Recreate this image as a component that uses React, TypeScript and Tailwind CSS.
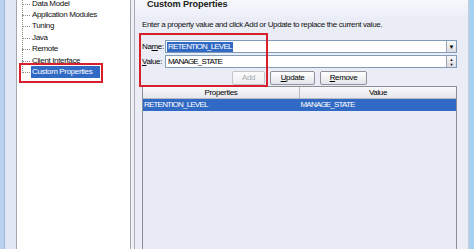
import React from "react";

const font = { fontFamily: '"Liberation Sans", Arial, sans-serif' };

function TreeItem({ label, selected }: { label: string; selected?: boolean }) {
  return (
    <div className="relative flex h-[11.4px] items-center">
      <div className="absolute left-[5px] top-1/2 w-[8px] border-t border-dotted border-[#8c8c8c]" />
      <span
        className={
          selected
            ? "ml-[14px] bg-[#316ac5] pl-[1px] pr-[8px] leading-[12px] text-white"
            : "ml-[15px] leading-[12px] text-[#111]"
        }
      >
        {label}
      </span>
    </div>
  );
}

export default function App() {
  return (
    <div
      className="relative flex h-[249px] w-[474px] overflow-hidden bg-[#e9ecf6] text-[8px] tracking-[-0.35px] text-black"
      style={font}
    >
      {/* left chrome */}
      <div className="w-[5px] shrink-0 border-r border-[#9fb8d8] bg-[#b9d2ee]" />
      <div className="w-[11px] shrink-0 bg-[#e2e7f5]" />
      {/* tree panel */}
      <div className="relative w-[115px] shrink-0 border-x border-[#a4a6b0] bg-white">
        <div className="absolute left-[5px] top-0 h-[73px] border-l border-dotted border-[#8c8c8c]" />
        <div className="mt-[-2px] flex flex-col">
          <TreeItem label="Data Model" />
          <TreeItem label="Application Modules" />
          <TreeItem label="Tuning" />
          <TreeItem label="Java" />
          <TreeItem label="Remote" />
          <TreeItem label="Client Interface" />
          <TreeItem label="Custom Properties" selected />
        </div>
        {/* annotation */}
        <div className="absolute left-[2px] top-[63px] h-[20px] w-[84px] border-2 border-[#d8202c]" />
      </div>
      {/* splitter */}
      <div className="w-[3px] shrink-0 bg-[#eef0f6]" />
      {/* right panel */}
      <div className="relative flex min-w-0 flex-1 flex-col border-l border-[#a9acb8] bg-[#eaedf6]">
        <div className="flex h-[17px] shrink-0 items-center bg-gradient-to-b from-[#f7f8fc] to-[#eceff8] pl-[12px]">
          <span className="mt-[-7px] text-[9.2px] font-bold tracking-[-0.1px] text-[#222]">Custom Properties</span>
        </div>
        <div className="flex flex-col pl-[7px] pr-[11px]">
          <div className="mt-[2px] h-[12px] leading-[12px] text-[#111]">
            Enter a property value and click Add or Update to replace the current value.
          </div>
          <div className="mt-[9px] flex h-[13px] items-center">
            <span className="w-[23px]">
              Na<span className="underline">m</span>e:
            </span>
            <div className="flex h-[13px] flex-1 items-center border border-[#7f9db9] bg-white">
              <span className="ml-[1px] bg-[#316ac5] px-[1px] leading-[10px] tracking-[-0.8px] text-white">RETENTION_LEVEL</span>
              <div className="flex-1" />
              <div className="flex h-full w-[10px] items-center justify-center border-l border-[#9ca3b4] bg-gradient-to-b from-[#f8f8f8] to-[#dcdde4] text-[6px] leading-none tracking-normal">
                ▼
              </div>
            </div>
          </div>
          <div className="mt-[2px] flex h-[13px] items-center">
            <span className="w-[23px]">
              <span className="underline">V</span>alue:
            </span>
            <div className="flex h-[13px] flex-1 items-center border border-[#7f9db9] bg-white">
              <span className="ml-[2px] leading-[10px] tracking-[-0.8px]">MANAGE_STATE</span>
              <div className="flex-1" />
              <div className="flex h-full w-[10px] flex-col items-center justify-center border-l border-[#9ca3b4] bg-gradient-to-b from-[#f8f8f8] to-[#dcdde4] text-[4px] leading-[5px] tracking-normal">
                <span>▲</span>
                <span>▼</span>
              </div>
            </div>
          </div>
          <div className="mt-[3px] flex h-[14px] justify-center gap-[5px]">
            <div className="flex w-[33px] items-center justify-center rounded-[2px] border border-[#c4c6cc] bg-gradient-to-b from-[#fbfbfb] to-[#eeeef2] text-[#a9abb2]">
              Add
            </div>
            <div className="flex w-[45px] items-center justify-center rounded-[2px] border border-[#8e939e] bg-gradient-to-b from-[#ffffff] to-[#e4e5ea]">
              <span>
                <span className="underline">U</span>pdate
              </span>
            </div>
            <div className="flex w-[47px] items-center justify-center rounded-[2px] border border-[#8e939e] bg-gradient-to-b from-[#ffffff] to-[#e4e5ea]">
              <span>
                <span className="underline">R</span>emove
              </span>
            </div>
          </div>
          {/* table */}
          <div className="mt-[1px] flex h-[170px] flex-col border border-[#8a8e99] bg-[#e8ebf6]">
            <div className="flex h-[12px] shrink-0 border-b border-[#b8bac2] bg-gradient-to-b from-[#fafafa] to-[#e6e7ec]">
              <div className="flex flex-1 items-center justify-center border-r border-[#b8bac2]">Properties</div>
              <div className="flex flex-1 items-center justify-center">Value</div>
            </div>
            <div className="flex h-[12px] shrink-0 bg-[#316ac5] tracking-[-0.8px] text-white">
              <div className="flex flex-1 items-center pl-[1px]">RETENTION_LEVEL</div>
              <div className="flex flex-1 items-center pl-[1px]">MANAGE_STATE</div>
            </div>
          </div>
        </div>
        {/* annotation */}
        <div className="absolute left-[4px] top-[33px] h-[54px] w-[129px] border-2 border-[#d8202c]" />
      </div>
      {/* right chrome */}
      <div className="w-[1px] shrink-0 bg-[#c9cdd8]" />
      <div className="w-[5px] shrink-0 bg-[#a6d2f2]" />
    </div>
  );
}
